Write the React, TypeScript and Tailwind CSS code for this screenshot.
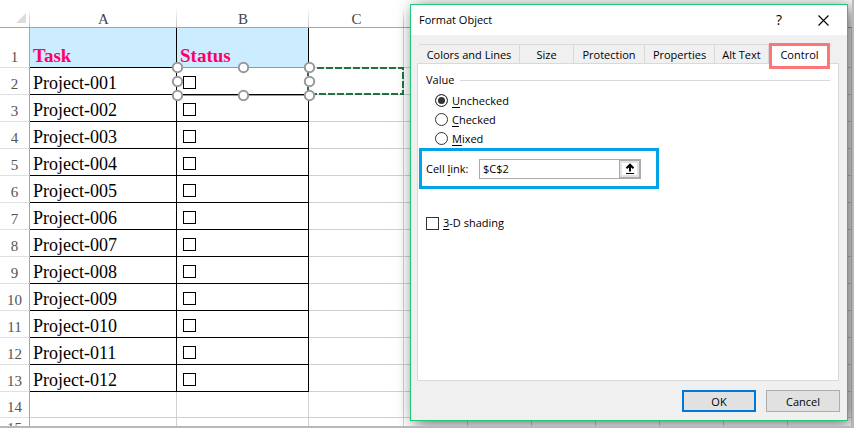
import { useState } from "react";

const columns = ["A", "B", "C"];
const spareColumns = Array.from({ length: 7 }, (_, i) => i);
const rows = Array.from({ length: 14 }, (_, i) => i + 2);
const tabs = [
  { name: "Colors and Lines", width: "w-[101px]" },
  { name: "Size", width: "w-[54px]" },
  { name: "Protection", width: "w-[71px]" },
  { name: "Properties", width: "w-[70px]" },
  { name: "Alt Text", width: "w-[54px]" },
];
const values = ["Unchecked", "Checked", "Mixed"];

const taskName = (row: number) => `Project-${String(row - 1).padStart(3, "0")}`;

const rowHeight = (row: number) => {
  if (row === 14) return "h-[26px]";
  if (row === 15) return "h-[21px]";
  return "h-[27px]";
};

const Mnemonic = ({ text }: { text: string }) => (
  <span>
    <span className="underline underline-offset-2">{text[0]}</span>
    {text.slice(1)}
  </span>
);

/* Selection frame of the check box object in B2 */
const ObjectHandles = () => (
  <svg
    className="absolute -left-2 -top-2 z-10 overflow-visible pointer-events-none"
    width="148"
    height="44"
    fill="white"
    stroke="#999999"
  >
    <path d="M8 7.5H140M8 35.5H140" fill="none" />
    <g strokeWidth="2">
      {[8.5, 74.5, 140.5].map((x) =>
        [7.5, 21.5, 35.5].map((y) =>
          x === 74.5 && y === 21.5 ? null : (
            <circle key={`${x}-${y}`} cx={x} cy={y} r="4.7" />
          )
        )
      )}
    </g>
  </svg>
);

/* Marching ants round the linked cell */
const LinkedCell = () => (
  <svg
    className="absolute -left-px -top-px overflow-visible pointer-events-none"
    width="96"
    height="28"
    fill="none"
    stroke="#217346"
    strokeWidth="2"
  >
    <path d="M0 1H95V27H0V1" strokeDasharray="7 2" />
  </svg>
);

const Sheet = () => (
  <table className="w-full table-fixed border-separate border-spacing-0 font-['Liberation_Serif',serif]">
    <colgroup>
      <col className="w-[30px]" />
      <col className="w-[147px]" />
      <col className="w-[132px]" />
      <col className="w-[95px]" />
    </colgroup>
    <thead>
      <tr className="h-7 text-[15px] leading-4 text-[#444444]">
        <th className="border-b border-[#a6a6a6] bg-[linear-gradient(to_bottom,#ffffff,#c4c4c4)] bg-[length:1px_19px] bg-right-bottom bg-no-repeat p-0 align-bottom">
          <svg className="mb-1 ml-4" width="10" height="10" fill="#dcdcdc">
            <path d="M10 0V10H0Z" />
          </svg>
        </th>
        {columns.map((name) => (
          <th
            key={name}
            className="border-b border-[#a6a6a6] bg-[linear-gradient(to_bottom,#ffffff,#c4c4c4)] bg-[length:1px_19px] bg-right-bottom bg-no-repeat p-0 align-bottom font-normal"
          >
            {name}
          </th>
        ))}
        {spareColumns.map((n) => (
          <th key={n} className="border-b border-[#a6a6a6] p-0" />
        ))}
      </tr>
    </thead>
    <tbody>
      <tr className="h-10 text-[19px] leading-5 font-bold text-[#ff0066]">
        <th className="border-r border-b border-r-[#a6a6a6] border-b-[#e0e0e0] p-0 align-bottom text-[15px] font-normal text-[#555555]">
          1
        </th>
        <td className="border-r border-b border-black bg-[#ccecff] px-[3px] pb-px align-bottom">Task</td>
        <td className="border-r border-b border-black bg-[#ccecff] px-[3px] pb-px align-bottom">Status</td>
        <td className="border-r border-b border-[#d0d0d0] p-0" />
        {spareColumns.map((n) => (
          <td key={n} className="border-r border-b border-[#d0d0d0] p-0" />
        ))}
      </tr>
      {rows.map((row) => (
        <tr key={row} className={rowHeight(row)}>
          <th className="border-r border-b border-r-[#a6a6a6] border-b-[#e0e0e0] p-0 align-bottom text-[15px] leading-5 font-normal text-[#555555]">
            {row}
          </th>
          {row < 14 ? (
            <>
              <td className="border-r border-b border-black px-[3px] py-0 pb-px align-bottom text-[18px] leading-5 text-black">
                {taskName(row)}
              </td>
              <td className="relative border-r border-b border-black px-1.5 py-0">
                <input
                  type="checkbox"
                  aria-label={taskName(row)}
                  className="mt-0.5 block size-[13px] appearance-none border border-black bg-white checked:bg-black"
                />
                {row === 2 && <ObjectHandles />}
              </td>
            </>
          ) : (
            <>
              <td className="border-r border-b border-[#d0d0d0] p-0" />
              <td className="border-r border-b border-[#d0d0d0] p-0" />
            </>
          )}
          <td className="relative border-r border-b border-[#d0d0d0] p-0">
            {row === 2 && <LinkedCell />}
          </td>
          {spareColumns.map((n) => (
            <td key={n} className="border-r border-b border-[#d0d0d0] p-0" />
          ))}
        </tr>
      ))}
    </tbody>
  </table>
);

const FormatDialog = () => {
  const [value, setValue] = useState("Unchecked");
  const [link, setLink] = useState("$C$2");

  return (
    <div
      role="dialog"
      aria-label="Format Object"
      className="absolute top-1 right-1 z-20 flex h-[417px] w-[438px] flex-col border border-[#1fc977] bg-[#f0f0f0] font-['Open_Sans','Noto_Sans',sans-serif] text-[11px] leading-4 text-black shadow-[4px_3px_16px_rgba(0,0,0,0.6)]"
    >
      {/* Title bar */}
      <div className="flex h-[30px] items-center bg-white pl-2">
        <h1 className="flex-1">Format Object</h1>
        <button type="button" aria-label="Help" className="w-8 text-[14px]">
          ?
        </button>
        <button type="button" aria-label="Close" className="mr-3 ml-4 flex w-6 justify-center">
          <svg width="11" height="11" stroke="black" strokeWidth="1.1">
            <path d="M.5 .5L10.5 10.5M10.5 .5L.5 10.5" />
          </svg>
        </button>
      </div>

      {/* Tabs */}
      <div role="tablist" className="mt-2 ml-2 flex h-5 items-end">
        {tabs.map((tab) => (
          <button
            key={tab.name}
            type="button"
            role="tab"
            aria-selected="false"
            className={`${tab.width} h-[19px] shrink-0 whitespace-nowrap border-t border-r border-[#d9d9d9] pt-px`}
          >
            {tab.name}
          </button>
        ))}
        <button
          type="button"
          role="tab"
          aria-selected="true"
          className="z-10 -mb-1.5 h-[26px] w-[61px] border-[3px] border-[#ff7575] bg-white pb-0.5"
        >
          Control
        </button>
      </div>

      {/* Control panel */}
      <div role="tabpanel" className="mr-2 ml-1.5 flex-1 border border-[#d9d9d9] bg-white pt-2">
        <fieldset className="px-2">
          <legend className="flex w-full items-center gap-1.5">
            Value
            <span className="h-px flex-1 bg-[#d9d9d9]" />
          </legend>
          <div className="mt-[3px] ml-[9px]">
            {values.map((name) => (
              <label key={name} className="flex h-[19px] items-center gap-1">
                <input
                  type="radio"
                  name="value"
                  checked={value === name}
                  onChange={() => setValue(name)}
                  className="size-[13px] appearance-none rounded-full border border-[#333333] bg-white checked:bg-[#333333] checked:shadow-[inset_0_0_0_2px_white]"
                />
                <Mnemonic text={name} />
              </label>
            ))}
          </div>
        </fieldset>

        <div className="ml-px flex h-[41px] w-60 items-center border-[3px] border-[#00a2e8] pl-1">
          <label htmlFor="cell-link" className="w-[53px] whitespace-nowrap">
            Cell <span className="underline underline-offset-2">l</span>ink:
          </label>
          <input
            id="cell-link"
            type="text"
            value={link}
            onChange={(e) => setLink(e.target.value)}
            className="h-5 w-[141px] border border-[#ababab] bg-white px-[3px]"
          />
          <button
            type="button"
            aria-label="Collapse dialog"
            className="flex h-5 w-[21px] items-center justify-center border-2 border-l-0 border-[#ababab] bg-white shadow-[inset_0_0_0_2px_#e3e3e3]"
          >
            <svg width="10" height="11" fill="none" stroke="black">
              <path d="M5 8.5V2M1.5 5.2L5 1.6L8.5 5.2" strokeWidth="2" />
              <path d="M3 4H7L5 1.5Z" fill="black" />
              <path d="M1 10.5H9" />
            </svg>
          </button>
        </div>

        <label className="mt-[26px] ml-2 flex items-center gap-1">
          <input
            type="checkbox"
            className="size-[13px] appearance-none border border-[#333333] bg-white checked:bg-[#333333]"
          />
          <Mnemonic text="3-D shading" />
        </label>
      </div>

      {/* Buttons */}
      <div className="mt-[9px] mr-[7px] mb-2 flex justify-end gap-2.5">
        <button type="button" className="h-[22px] w-[74px] border-2 border-[#0078d7] bg-[#e1e1e1] leading-none">
          OK
        </button>
        <button type="button" className="h-[22px] w-[74px] border border-[#adadad] bg-[#e1e1e1] leading-none">
          Cancel
        </button>
      </div>
    </div>
  );
};

const App = () => (
  <main className="relative h-screen overflow-hidden border-r-2 border-b-2 border-[#b8b8b8] bg-white">
    <Sheet />
    <FormatDialog />
  </main>
);

export default App;
